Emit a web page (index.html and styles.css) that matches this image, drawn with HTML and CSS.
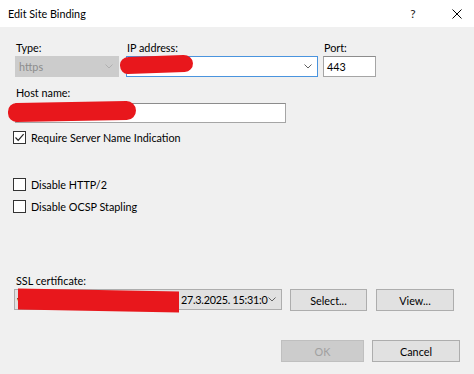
FILE: index.html
```html
<!DOCTYPE html>
<html>
<head>
<meta charset="utf-8">
<link rel="stylesheet" href="styles.css">
</head>
<body>
<div class="window">
  <div class="titlebar">
    <span class="title">Edit Site Binding</span>
    <span class="tb-btn help">?</span>
    <span class="tb-btn close"><svg width="10" height="10" viewBox="0 0 10 10"><path d="M0.5 0.5L9.5 9.5M9.5 0.5L0.5 9.5" stroke="#000" stroke-width="1" fill="none"/></svg></span>
  </div>
  <div class="content">
    <div class="row1">
      <div class="field f-type">
        <div class="label">Type:</div>
        <div class="combo disabled"><span class="ctext">https</span><svg class="chev" width="8" height="5" viewBox="0 0 8 5"><path d="M0.5 0.5L4 4L7.5 0.5" stroke="#b0b0b0" fill="none"/></svg></div>
      </div>
      <div class="field f-ip">
        <div class="label">IP address:</div>
        <div class="combo focused"><span class="ctext"></span><svg class="chev" width="8" height="5" viewBox="0 0 8 5"><path d="M0.5 0.5L4 4L7.5 0.5" stroke="#606060" fill="none"/></svg></div>
        <div class="scribble s-ip"></div>
      </div>
      <div class="field f-port">
        <div class="label">Port:</div>
        <div class="textbox port">443</div>
      </div>
    </div>
    <div class="field f-host">
      <div class="label">Host name:</div>
      <div class="textbox host"></div>
      <div class="scribble s-host"></div>
    </div>
    <div class="check c1"><span class="box"><svg width="11" height="11" viewBox="0 0 11 11"><path d="M1.5 5.5L4.2 8.3L9.6 2.2" stroke="#222" stroke-width="1.2" fill="none"/></svg></span><span>Require Server Name Indication</span></div>
    <div class="check c2"><span class="box"></span><span>Disable HTTP/2</span></div>
    <div class="check c3"><span class="box"></span><span>Disable OCSP Stapling</span></div>
    <div class="label ssl-label">SSL certificate:</div>
    <div class="ssl-row">
      <div class="combo ssl"><span class="ctext"><span class="hidden-part">v</span><span class="date">27.3.2025. 15:31:0</span></span><svg class="chev" width="8" height="5" viewBox="0 0 8 5"><path d="M0.5 0.5L4 4L7.5 0.5" stroke="#606060" fill="none"/></svg><div class="scribble s-ssl"></div></div>
      <button class="btn select">Select...</button>
      <button class="btn view">View...</button>
    </div>
    <div class="bottom-row">
      <button class="btn ok" disabled>OK</button>
      <button class="btn cancel">Cancel</button>
    </div>
  </div>
</div>
</body>
</html>
```
FILE: styles.css
```css
html, body {
  margin: 0;
  padding: 0;
}
body {
  width: 474px;
  height: 374px;
  overflow: hidden;
  background: #f0f0f0;
  font-family: Lato, "Noto Sans", sans-serif;
  font-size: 10.8px;
  color: #000;
}
.window {
  width: 474px;
  height: 374px;
}
.titlebar {
  height: 27px;
  background: #fff;
  display: flex;
  align-items: center;
}
.title {
  padding-left: 8px;
  font-size: 10.8px;
  flex: 1;
}
.tb-btn {
  width: 34px;
  text-align: center;
  display: flex;
  justify-content: center;
  align-items: center;
}
.help {
  font-size: 12px;
  color: #222;
  margin-right: 10px;
}
.close svg {
  display: block;
}
.content {
  padding: 13px 0 0 15px;
}
.label {
  height: 15px;
  line-height: 15px;
  padding-left: 1px;
}
.row1 {
  display: flex;
}
.field {
  position: relative;
}
.f-type { width: 104px; }
.f-ip { width: 192px; margin-left: 7px; }
.f-port { width: 53px; margin-left: 5px; }
.combo {
  box-sizing: border-box;
  height: 21px;
  margin-top: 1px;
  display: flex;
  align-items: center;
  padding: 0 5px 0 3px;
  position: relative;
}
.ctext {
  flex: 1;
  white-space: nowrap;
  overflow: hidden;
}
.combo.disabled {
  background: #cccccc;
  border: 1px solid #cccccc;
  color: #8d8d8d;
}
.combo.focused {
  background: #fff;
  border: 1px solid #4a94de;
}
.textbox {
  box-sizing: border-box;
  background: #fff;
  border: 1px solid #a5a5a5;
  border-top-color: #8c8c8c;
  padding: 0 3px;
  display: flex;
  align-items: center;
}
.textbox.port {
  height: 21px;
  margin-top: 1px;
}
.f-host {
  margin-top: 8px;
  width: 271px;
}
.textbox.host {
  height: 20px;
  margin-top: 3px;
}
.scribble {
  position: absolute;
  background: #e8171c;
}
.s-ip {
  left: -6px;
  top: 16px;
  width: 73px;
  height: 17px;
  border-radius: 9px 10px 9px 8px / 8px 9px 9px 9px;
  transform: rotate(-2deg);
}
.s-host {
  left: -7px;
  top: 17px;
  width: 128px;
  height: 19px;
  border-radius: 9px 10px 10px 9px;
  transform: rotate(-1deg);
}
.check {
  display: flex;
  align-items: center;
  height: 13px;
  line-height: 13px;
  margin-left: -2px;
}
.check .box {
  box-sizing: border-box;
  width: 13px;
  height: 13px;
  background: #fff;
  border: 1px solid #333;
  margin-right: 5px;
  display: flex;
  align-items: center;
  justify-content: center;
}
.check .box svg { display: block; }
.c1 { margin-top: 8px; }
.c2 { margin-top: 34px; }
.c3 { margin-top: 9px; }
.ssl-label {
  margin-top: 60px;
}
.ssl-row {
  display: flex;
  align-items: flex-start;
}
.combo.ssl {
  width: 268px;
  margin-left: -1px;
  background: #e1e1e1;
  border: 1px solid #adadad;
  padding-left: 2px;
}
.hidden-part {
  display: inline-block;
  width: 164px;
}
.date {
  letter-spacing: -0.25px;
}
.s-ssl {
  left: 3px;
  top: 0px;
  width: 161px;
  height: 21px;
  transform: skewY(1deg);
}
.btn {
  box-sizing: border-box;
  font-family: inherit;
  font-size: 10.8px;
  color: #000;
  background: #e1e1e1;
  border: 1px solid #adadad;
  padding: 0;
  margin: 0;
}
.select {
  width: 77px;
  height: 22px;
  margin-left: 8px;
  margin-top: 1px;
}
.view {
  width: 78px;
  height: 22px;
  margin-left: 9px;
  margin-top: 1px;
}
.bottom-row {
  display: flex;
  justify-content: flex-end;
  padding-right: 14px;
  margin-top: 29px;
}
.ok {
  width: 83px;
  height: 22px;
  background: #cccccc;
  border-color: #bfbfbf;
  color: #a0a0a0;
}
.cancel {
  width: 88px;
  height: 22px;
  margin-left: 8px;
}
```
